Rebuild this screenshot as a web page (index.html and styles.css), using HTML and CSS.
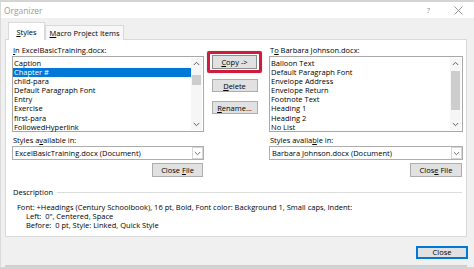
FILE: index.html
```html
<!DOCTYPE html>
<html>
<head>
<meta charset="utf-8">
<title>Organizer</title>
<link rel="stylesheet" href="styles.css">
</head>
<body>
<div class="window">
  <div class="titlebar">
    <span class="title">Organizer</span>
    <span class="tb-btns">
      <span class="help">?</span>
      <svg class="close-x" width="9" height="9" viewBox="0 0 9 9"><path d="M0.5 0.5L8.5 8.5M8.5 0.5L0.5 8.5" stroke="#8a8a8a" stroke-width="0.9" fill="none"/></svg>
    </span>
  </div>
  <div class="body">
    <div class="tabs">
      <div class="tab active"><u>S</u>tyles</div>
      <div class="tab"><u>M</u>acro Project Items</div>
    </div>
    <div class="panel">
      <div class="columns">
        <div class="col">
          <div class="label"><u>I</u>n ExcelBasicTraining.docx:</div>
          <div class="list">
            <ul class="items">
              <li>Caption</li>
              <li class="selected">Chapter #</li>
              <li>child-para</li>
              <li>Default Paragraph Font</li>
              <li>Entry</li>
              <li>Exercise</li>
              <li>first-para</li>
              <li>FollowedHyperlink</li>
            </ul>
            <div class="scrollbar">
              <svg class="arr" width="7" height="5" viewBox="0 0 7 5"><path d="M0.8 4L3.5 1.3L6.2 4" stroke="#606060" stroke-width="1" fill="none"/></svg>
              <div class="track"><div class="thumb thumb-left"></div></div>
              <svg class="arr" width="7" height="5" viewBox="0 0 7 5"><path d="M0.8 1L3.5 3.7L6.2 1" stroke="#606060" stroke-width="1" fill="none"/></svg>
            </div>
          </div>
          <div class="label label-gap">Styles a<u>v</u>ailable in:</div>
          <div class="combo">
            <span class="combo-text">ExcelBasicTraining.docx (Document)</span>
            <span class="combo-arrow"><svg width="7" height="5" viewBox="0 0 7 5"><path d="M0.8 1L3.5 3.7L6.2 1" stroke="#707070" stroke-width="1" fill="none"/></svg></span>
          </div>
          <div class="btn-row"><button class="btn btn-file">Close <u>F</u>ile</button></div>
        </div>

        <div class="mid">
          <div class="highlight"><button class="btn btn-mid"><u>C</u>opy -&gt;</button></div>
          <button class="btn btn-mid btn-delete"><u>D</u>elete</button>
          <button class="btn btn-mid btn-rename"><u>R</u>ename...</button>
        </div>

        <div class="col col-right">
          <div class="label">T<u>o</u> Barbara Johnson.docx:</div>
          <div class="list">
            <ul class="items">
              <li>Balloon Text</li>
              <li>Default Paragraph Font</li>
              <li>Envelope Address</li>
              <li>Envelope Return</li>
              <li>Footnote Text</li>
              <li>Heading 1</li>
              <li>Heading 2</li>
              <li>No List</li>
            </ul>
            <div class="scrollbar">
              <svg class="arr" width="7" height="5" viewBox="0 0 7 5"><path d="M0.8 4L3.5 1.3L6.2 4" stroke="#606060" stroke-width="1" fill="none"/></svg>
              <div class="track"><div class="thumb thumb-right"></div></div>
              <svg class="arr" width="7" height="5" viewBox="0 0 7 5"><path d="M0.8 1L3.5 3.7L6.2 1" stroke="#606060" stroke-width="1" fill="none"/></svg>
            </div>
          </div>
          <div class="label label-gap">Styles availa<u>b</u>le in:</div>
          <div class="combo">
            <span class="combo-text">Barbara Johnson.docx (Document)</span>
            <span class="combo-arrow"><svg width="7" height="5" viewBox="0 0 7 5"><path d="M0.8 1L3.5 3.7L6.2 1" stroke="#707070" stroke-width="1" fill="none"/></svg></span>
          </div>
          <div class="btn-row"><button class="btn btn-file">Clos<u>e</u> File</button></div>
        </div>
      </div>

      <div class="desc">
        <div class="desc-head"><span class="desc-title">Description</span><span class="rule"></span></div>
        <div class="desc-text">
          <div>Font: +Headings (Century Schoolbook), 16 pt, Bold, Font color: Background 1, Small caps, Indent:</div>
          <div class="indent">Left:&nbsp; 0", Centered, Space</div>
          <div class="indent">Before:&nbsp; 0 pt, Style: Linked, Quick Style</div>
        </div>
      </div>
    </div>
    <div class="footer"><button class="btn btn-default">Close</button></div>
  </div>
</div>
</body>
</html>
```

FILE: styles.css
```css
* { box-sizing: border-box; }
html, body { margin: 0; padding: 0; }
body {
  width: 474px;
  height: 269px;
  overflow: hidden;
  background: #d4d4d4;
  font-family: "Open Sans", "Noto Sans", sans-serif;
  font-size: 7.5px;
  color: #000;
}
u { text-decoration: underline; text-underline-offset: 1px; text-decoration-thickness: 0.6px; }

.window {
  margin-top: 2px;
  height: 265px;
  border-left: 1px solid #dadada;
  background: #f0f0f0;
  display: flex;
  flex-direction: column;
}

.titlebar {
  height: 16px;
  background: #fff;
  display: flex;
  align-items: center;
  justify-content: space-between;
  padding: 0 11px 0 3px;
}
.title { color: #9a9a9a; font-size: 8.4px; }
.tb-btns { display: flex; align-items: center; gap: 24px; }
.help { color: #8a8a8a; font-size: 7.5px; }

.body {
  flex: 1;
  padding: 4px 7px 0 4px;
  display: flex;
  flex-direction: column;
}

.tabs {
  display: flex;
  align-items: flex-end;
  padding-left: 3px;
  height: 18px;
  margin-bottom: -1px;
  position: relative;
  z-index: 1;
}
.tab {
  height: 15px;
  padding: 0;
  border: 1px solid #d9d9d9;
  border-bottom: none;
  background: #f7f7f7;
  display: flex;
  align-items: center;
  justify-content: center;
  font-size: 7.5px;
  width: 79px;
  white-space: nowrap;
}
.tab.active {
  height: 18px;
  width: 37px;
  background: #fff;
  padding-top: 1px;
}

.panel {
  height: 198px;
  background: #fff;
  border: 1px solid #d9d9d9;
  padding: 6px 0 0 6px;
}

.columns {
  display: flex;
  align-items: flex-start;
}
.col { width: 192px; display: flex; flex-direction: column; }
.col-right { width: 194px; margin-left: 7px; }

.label { height: 9px; line-height: 9px; font-size: 7.5px; padding-left: 1px; white-space: nowrap; }
.label-gap { margin-top: 3.5px; }

.list {
  margin-top: 1px;
  height: 76px;
  border: 1px solid #a8a8a8;
  display: flex;
  background: #fff;
}
.items {
  list-style: none;
  margin: 0;
  padding: 1.5px 0 0 0;
  flex: 1;
}
.items li {
  height: 9.2px;
  line-height: 9.2px;
  padding-left: 1px;
  font-size: 7.5px;
  white-space: nowrap;
}
.items li.selected { background: #0078d7; color: #fff; }

.scrollbar {
  width: 11px;
  margin: 1px 1px 1px 0;
  background: #f6f6f6;
  display: flex;
  flex-direction: column;
  align-items: center;
}
.scrollbar .arr { margin: 3px 0; flex: none; }
.track { flex: 1; width: 100%; position: relative; }
.thumb { position: absolute; left: 1px; right: 1px; background: #cdcdcd; }
.thumb-left { top: 6px; height: 10px; }
.thumb-right { top: 2px; height: 39px; }

.combo {
  margin-top: 1.5px;
  height: 14px;
  border: 1px solid #adadad;
  display: flex;
  align-items: stretch;
  background: #fff;
}
.combo-text { flex: 1; padding-left: 2px; line-height: 12px; font-size: 7.5px; white-space: nowrap; }
.combo-arrow {
  width: 11px;
  border: 1px solid #d6d6d6;
  display: flex;
  align-items: center;
  justify-content: center;
  background: #fff;
}

.btn-row { display: flex; justify-content: flex-end; margin-top: 3px; }
.btn {
  font-family: inherit;
  font-size: 7.5px;
  color: #000;
  background: #e1e1e1;
  border: 1px solid #adadad;
  height: 14px;
  padding: 0;
  margin: 0;
  line-height: 12px;
  white-space: nowrap;
}
.btn-file { width: 51px; margin-right: 1px; }
.col-right .btn-file { width: 52px; }

.mid {
  width: 55px;
  margin-left: 3px;
  margin-top: 5px;
  display: flex;
  flex-direction: column;
  align-items: center;
}
.highlight {
  border: 3px solid #d01c3c;
  border-radius: 2px;
  padding: 1px 2px;
  box-shadow: 0 0 1px rgba(160, 20, 40, 0.5);
}
.btn-mid { width: 46px; height: 14px; }
.highlight .btn-mid { width: 45px; border-color: #8d8d8d; }
.btn-delete { margin-top: 6px; height: 13px; }
.btn-rename { margin-top: 9px; height: 13px; }

.desc { margin-top: 10.5px; }
.desc-head { display: flex; align-items: center; height: 9px; }
.desc-title { font-size: 7.5px; line-height: 9px; padding-left: 1px; }
.rule { flex: 1; height: 1px; background: #dcdcdc; margin: 0 4px; }
.desc-text { margin-top: 6px; padding-left: 5px; font-size: 7.5px; }
.desc-text div { height: 9px; line-height: 9px; white-space: nowrap; }
.desc-text .indent { padding-left: 9px; }

.footer {
  flex: 1;
  display: flex;
  justify-content: flex-end;
  align-items: flex-start;
  padding-top: 9px;
  border-bottom: 2px solid #cfcfcf;
}
.btn-default {
  width: 52px;
  height: 13px;
  border: 1px solid #0078d7;
  box-shadow: inset 0 0 0 1px #0078d7;
  margin-right: -1px;
  line-height: 11px;
}
```
